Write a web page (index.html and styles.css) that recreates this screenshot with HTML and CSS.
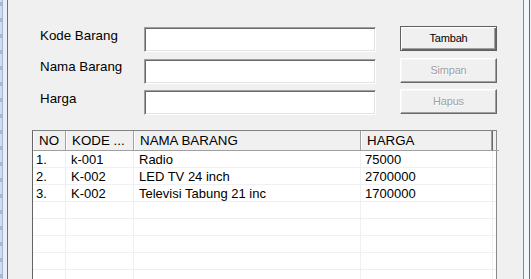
FILE: index.html
```html
<!DOCTYPE html>
<html>
<head>
<meta charset="utf-8">
<link rel="stylesheet" href="styles.css">
</head>
<body>
<div class="window">
  <div class="frame-left"></div>
  <main class="content">
    <div class="form">
      <label class="label">Kode Barang</label>
      <div class="field"></div>
      <button class="btn btn-default">Tambah</button>

      <label class="label">Nama Barang</label>
      <div class="field"></div>
      <button class="btn" disabled>Simpan</button>

      <label class="label">Harga</label>
      <div class="field"></div>
      <button class="btn" disabled>Hapus</button>
    </div>

    <div class="list">
      <div class="list-head">
        <div class="hcell c-no">NO</div>
        <div class="hcell c-kode">KODE ...</div>
        <div class="hcell c-nama">NAMA BARANG</div>
        <div class="hcell c-harga">HARGA</div>
        <div class="hcell c-fill"></div>
      </div>
      <div class="row">
        <div class="cell c-no">1.</div>
        <div class="cell c-kode">k-001</div>
        <div class="cell c-nama">Radio</div>
        <div class="cell c-harga">75000</div>
        <div class="cell c-fill"></div>
      </div>
      <div class="row">
        <div class="cell c-no">2.</div>
        <div class="cell c-kode">K-002</div>
        <div class="cell c-nama">LED TV 24 inch</div>
        <div class="cell c-harga">2700000</div>
        <div class="cell c-fill"></div>
      </div>
      <div class="row">
        <div class="cell c-no">3.</div>
        <div class="cell c-kode">K-002</div>
        <div class="cell c-nama">Televisi Tabung 21 inc</div>
        <div class="cell c-harga">1700000</div>
        <div class="cell c-fill"></div>
      </div>
      <div class="row"><div class="cell c-no"></div><div class="cell c-kode"></div><div class="cell c-nama"></div><div class="cell c-harga"></div><div class="cell c-fill"></div></div>
      <div class="row"><div class="cell c-no"></div><div class="cell c-kode"></div><div class="cell c-nama"></div><div class="cell c-harga"></div><div class="cell c-fill"></div></div>
      <div class="row"><div class="cell c-no"></div><div class="cell c-kode"></div><div class="cell c-nama"></div><div class="cell c-harga"></div><div class="cell c-fill"></div></div>
      <div class="row"><div class="cell c-no"></div><div class="cell c-kode"></div><div class="cell c-nama"></div><div class="cell c-harga"></div><div class="cell c-fill"></div></div>
      <div class="row"><div class="cell c-no"></div><div class="cell c-kode"></div><div class="cell c-nama"></div><div class="cell c-harga"></div><div class="cell c-fill"></div></div>
    </div>
  </main>
  <div class="frame-right"></div>
</div>
</body>
</html>
```

FILE: styles.css
```css
* { box-sizing: border-box; }

html, body {
  margin: 0;
  padding: 0;
}

body {
  width: 531px;
  height: 279px;
  overflow: hidden;
  background: #f0f0f0;
  font-family: "Liberation Sans", Arial, sans-serif;
  color: #000;
}

.window {
  display: flex;
  height: 279px;
}

.frame-left {
  width: 8px;
  flex: none;
  border-right: 1px solid #707070;
  background:
    linear-gradient(to right, transparent 0 2px, #aab7c8 2px 3px, #e8eef6 3px),
    repeating-linear-gradient(to bottom, #cddcf0 0 2px, #9cb9e2 2px 6px, #cddcf0 6px 16px);
}

.frame-right {
  width: 8px;
  flex: none;
  border-left: 1px solid #8a8a8a;
  background: linear-gradient(to right, #f3f6fa 0 5px, #6b6b6b 5px 6px, #eef1f5 6px);
}

.content {
  flex: 1;
  min-width: 0;
}

/* form */
.form {
  display: grid;
  grid-template-columns: 80px 232px 97px;
  grid-template-rows: repeat(3, 26px);
  column-gap: 24px;
  row-gap: 5.5px;
  padding: 26px 0 0 32px;
}

.label {
  font-size: 13.33px;
  line-height: 15px;
  margin-top: 1.5px;
  white-space: nowrap;
}

.field {
  margin-top: 1px;
  height: 25px;
  background: #fff;
  border: 1px solid;
  border-color: #a0a0a0 #fff #fff #a0a0a0;
  box-shadow: inset 1px 1px 0 #696969, inset -1px -1px 0 #e3e3e3;
}

.btn {
  height: 25px;
  margin: 0;
  padding: 0 0 1px;
  background: #f0f0f0;
  font-family: "Liberation Sans", Arial, sans-serif;
  font-size: 11px;
  letter-spacing: -0.2px;
  color: #000;
  border: 1px solid;
  border-color: #fff #696969 #696969 #fff;
  box-shadow: inset -1px -1px 0 #a0a0a0, inset 1px 1px 0 #f7f7f7;
  border-radius: 0;
}

.btn-default {
  border: 1px solid #5f5f5f;
  box-shadow: inset 1px 1px 0 #fff, inset -1px -1px 0 #696969, inset -2px -2px 0 #a0a0a0;
}

.btn:disabled {
  color: #a0a0a0;
  text-shadow: 1px 1px 0 #fff;
}

/* list view */
.list {
  width: 465px;
  margin: 15px 0 0 24px;
  background: #fff;
  border: 1px solid;
  border-color: #828282 #8a8a8a #828282 #646464;
  border-bottom: none;
}

.list-head {
  display: flex;
  height: 20px;
  background: #f0f0f0;
}

.hcell {
  height: 20px;
  font-size: 13.33px;
  line-height: 18px;
  padding: 1px 0 0 6px;
  white-space: nowrap;
  overflow: hidden;
  border-right: 1px solid #a0a0a0;
  border-bottom: 1px solid #a0a0a0;
  box-shadow: inset 1px 0 0 #fff;
}

.hcell.c-harga {
  border-right: 1px solid #696969;
  box-shadow: inset 1px 0 0 #fff, inset -1px 0 0 #a0a0a0;
}

.hcell.c-fill {
  border-right: none;
  box-shadow: none;
}

.c-no { width: 33px; flex: none; }
.c-kode { width: 68px; flex: none; }
.c-nama { width: 227px; flex: none; }
.c-harga { width: 132px; flex: none; }
.c-fill { flex: 1; }

.row {
  display: flex;
  height: 17px;
  border-bottom: 1px solid #f0f0f0;
}

.cell {
  font-size: 13px;
  line-height: 14px;
  padding: 2px 0 0 5px;
  white-space: nowrap;
  overflow: hidden;
  border-right: 1px solid #f0f0f0;
}

.cell.c-no { padding-left: 3px; }
.cell.c-harga { padding-left: 4px; }
.cell.c-fill { border-right: none; }
```
